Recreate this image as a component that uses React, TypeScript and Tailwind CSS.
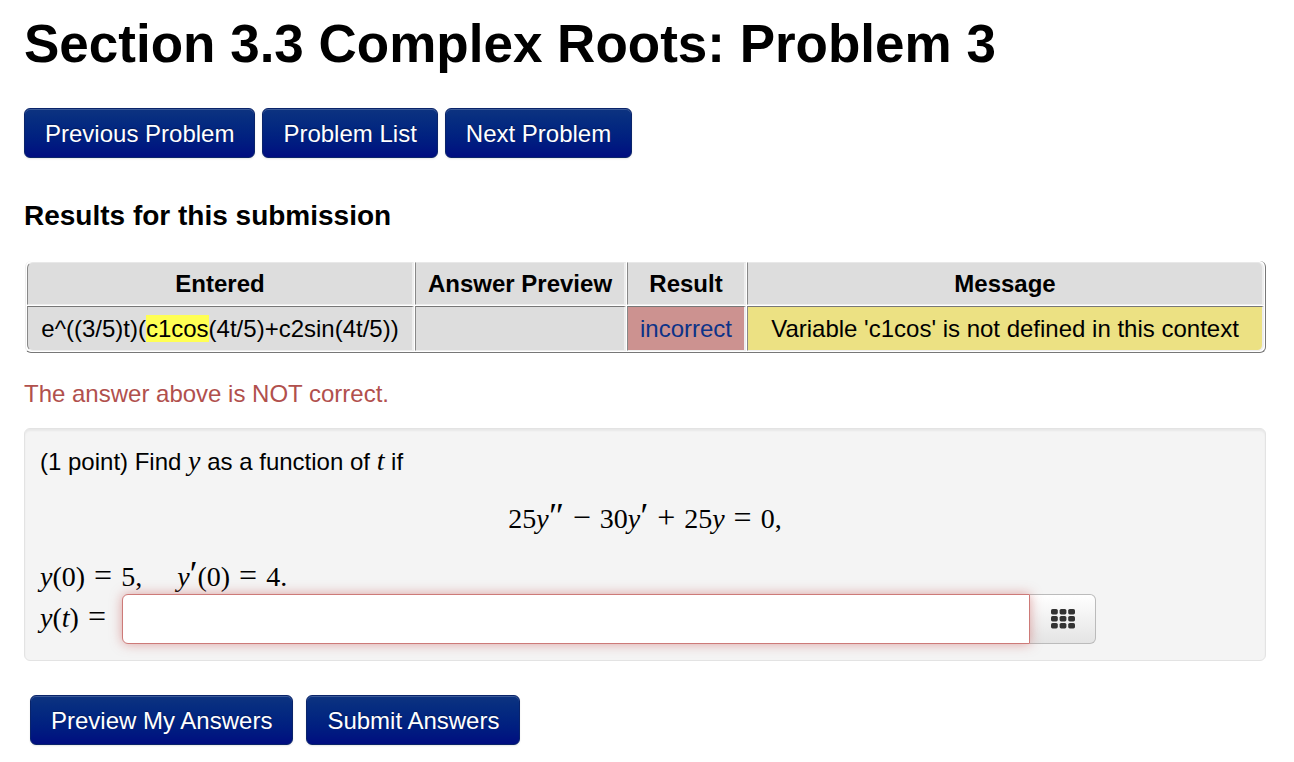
import type { ReactNode } from 'react'

const primaryButton =
  "h-[50px] rounded-md border border-[#0a246a] bg-linear-to-b from-[#0d3380] to-[#000c80] px-5 pt-0.5 text-2xl text-white [text-shadow:0_-1px_1px_rgba(0,0,0,0.3)] shadow-[inset_0_1px_0_rgba(255,255,255,0.2),0_1px_2px_rgba(0,0,0,0.1)]"

const headCell =
  "h-[43px] border-l border-l-[#888888] border-r-2 border-r-[#eeeeee] border-t border-t-[#e8e8e8] border-b border-b-[#eeeeee] bg-[#dddddd] font-bold"

const bodyCell =
  "h-[45px] border-l border-l-[#888888] border-r-2 border-r-[#eeeeee] border-t border-t-[#777777] border-b border-b-[#eeeeee] text-center"

function MathText({ children }: { children: ReactNode }) {
  return (
    <span className="whitespace-pre font-['Liberation_Serif',serif] text-[28px] leading-8">{children}</span>
  )
}

function Op({ children }: { children: ReactNode }) {
  return <span className="mx-[9px] text-[32px] leading-0">{children}</span>
}

function Prime({ children }: { children: ReactNode }) {
  return <i className="-ml-0.5 mr-0.5 text-[36px] leading-0">{children}</i>
}

function GridIcon() {
  const cells = [0, 1, 2]
  return (
    <svg width="24" height="20" viewBox="0 0 24 20" fill="#333333" aria-hidden="true">
      {cells.map((row) =>
        cells.map((col) => (
          <rect key={`${row}-${col}`} x={col * 8.6} y={row * 7} width="6.8" height="5.4" rx="1.6" />
        ))
      )}
    </svg>
  )
}

function ResultsTable() {
  return (
    <table className="ml-px w-[calc(100%-1px)] table-fixed border-separate border-spacing-x-px border-spacing-y-px rounded-md border-r border-b border-l border-r-[#777777] border-b-[#777777] border-l-[#eeeeee]">
      <colgroup>
        <col className="w-[387px]" />
        <col className="w-[211px]" />
        <col className="w-[119px]" />
        <col />
      </colgroup>
      <thead>
        <tr>
          <th className={`${headCell} rounded-tl-md`}>Entered</th>
          <th className={headCell}>Answer Preview</th>
          <th className={headCell}>Result</th>
          <th className={`${headCell} rounded-tr-md`}>Message</th>
        </tr>
      </thead>
      <tbody>
        <tr>
          <td className={`${bodyCell} rounded-bl-md bg-[#dddddd]`}>
            e^((3/5)t)(<span className="bg-[#ffff54]">c1cos</span>(4t/5)+c2sin(4t/5))
          </td>
          <td className={`${bodyCell} bg-[#dddddd]`}></td>
          <td className={`${bodyCell} bg-[#cc9290]`}>
            <a href="#answer" className="text-[#0d3388]">incorrect</a>
          </td>
          <td className={`${bodyCell} rounded-br-md bg-[#ece183]`}>
            Variable 'c1cos' is not defined in this context
          </td>
        </tr>
      </tbody>
    </table>
  )
}

export default function App() {
  return (
    <main className="pt-4 pr-7 pb-4 pl-6 font-['Liberation_Sans',Arial,sans-serif] text-2xl text-black">
      <h1 className="text-[53px] leading-14 font-bold">Section 3.3 Complex Roots: Problem 3</h1>

      <nav className="mt-9 flex gap-[7px]">
        <button className={primaryButton}>Previous Problem</button>
        <button className={primaryButton}>Problem List</button>
        <button className={primaryButton}>Next Problem</button>
      </nav>

      <h2 className="mt-10 mb-[27px] text-[28px] leading-9 font-bold">Results for this submission</h2>
      <ResultsTable />

      <p className="mt-[25px] text-[#b1504d]">The answer above is NOT correct.</p>

      <section className="mt-[18px] rounded-md border border-[#e3e3e3] bg-[#f4f4f4] px-[15px] py-4 shadow-[inset_0_2px_2px_rgba(0,0,0,0.05)]">
        <p className="leading-8">
          (1 point) Find <MathText><i>y</i></MathText> as a function of <MathText><i>t</i></MathText> if
        </p>
        <p className="mt-[25px] text-center leading-8">
          <MathText>25<i>y</i><Prime>″</Prime><Op>−</Op>30<i>y</i><Prime>′</Prime><Op>+</Op>25<i>y</i><Op>=</Op>0,</MathText>
        </p>
        <p className="mt-[25px] leading-8">
          <MathText><i>y</i>(0)<Op>=</Op>5,     <i>y</i><Prime>′</Prime>(0)<Op>=</Op>4.</MathText>
        </p>
        <div className="flex items-start">
          <label htmlFor="answer" className="w-[82px] pt-2 leading-8">
            <MathText><i>y</i>(<i>t</i>)<Op>=</Op></MathText>
          </label>
          <input
            id="answer"
            type="text"
            className="relative h-[50px] w-[908px] rounded-l-md border border-[#cd7a78] bg-white px-3 shadow-[0_0_12px_rgba(200,80,78,0.5)] outline-none"
          />
          <button
            aria-label="Open equation editor"
            className="flex h-[50px] w-[66px] items-center justify-center rounded-r-md border border-l-0 border-[#bbbbbb] bg-linear-to-b from-white to-[#e4e4e4]"
          >
            <GridIcon />
          </button>
        </div>
      </section>

      <div className="mt-[34px] flex gap-[13px] pl-1.5">
        <button className={primaryButton}>Preview My Answers</button>
        <button className={primaryButton}>Submit Answers</button>
      </div>
    </main>
  )
}
